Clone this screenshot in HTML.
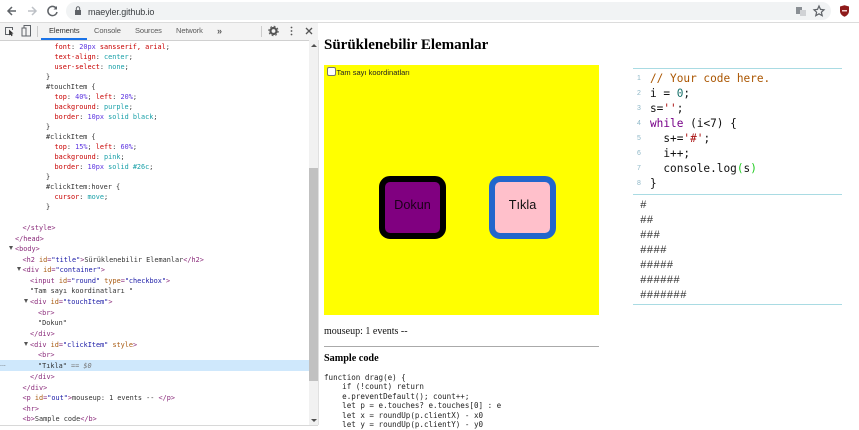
<!DOCTYPE html>
<html><head><meta charset="utf-8">
<style>
html,body{margin:0;padding:0;background:#fff;width:859px;height:430px;overflow:hidden}
body{position:relative;font-family:"Liberation Sans",sans-serif}
.a{position:absolute;white-space:pre}
.d{position:absolute;white-space:pre;font:6.85px/10px "DejaVu Sans Mono",monospace;color:#333}
.r{color:#c80000}.c{color:#18a0a8}.n{color:#5a32e0}.t{color:#8a2a7a}.at{color:#a85a10}.v{color:#1a1aa6}.g{color:#a8a8a8}
.tab{position:absolute;top:25px;font:7.5px/12px "Liberation Sans",sans-serif;letter-spacing:-.1px;color:#5a5a5a}
.cd{position:absolute;white-space:pre;font:11.1px/15px "DejaVu Sans Mono",monospace;color:#111;left:650px}
.ln{position:absolute;font:7px/15px "Liberation Sans",sans-serif;color:#8fb8c8;left:637px}
.o{position:absolute;white-space:pre;font:11.1px/15px "Liberation Mono",monospace;color:#333;left:640px}
.hl{position:absolute;left:633px;width:209px;height:1px;background:#a9dbe3}
</style></head><body>

<!-- browser bar -->
<div style="position:absolute;left:66px;top:2px;width:765px;height:18px;border-radius:9px;background:#f1f3f4"></div>
<svg style="position:absolute;left:0;top:0" width="100" height="22" fill="none" stroke-width="1.5">
<path d="M16 11H8M12 7l-4 4 4 4" stroke="#5f6368"/>
<path d="M28 11h8M32 7l4 4-4 4" stroke="#bdc1c6"/>
<path d="M56 8a4.6 4.6 0 1 0 1 4" stroke="#5f6368"/><path d="M57 6v3.5h-3.5z" fill="#5f6368"/>
<rect x="75" y="10" width="6" height="5" fill="#5f6368" stroke="none"/><path d="M76.3 10V8.5a1.7 1.7 0 0 1 3.4 0V10" stroke="#5f6368" stroke-width="1"/>
</svg>
<div class="a" style="left:88px;top:4.500px;font-size:9px;line-height:14px;letter-spacing:-.1px;color:#3c4043">maeyler.github.io</div>
<svg style="position:absolute;left:790px;top:0" width="69" height="22" fill="none">
<rect x="6" y="7" width="6" height="7" fill="#8a8f94"/><rect x="10" y="10" width="6" height="6" fill="#d0d2d5"/>
<path d="M29 6l1.5 3.4 3.5.4-2.6 2.4.8 3.5-3.2-1.9-3.2 1.9.8-3.5-2.6-2.4 3.5-.4z" stroke="#5f6368" stroke-width="1.2"/>
<path d="M50 6.5l4.5-1.2 4.5 1.2v4.5c0 3-2.3 4.8-4.5 5.8-2.2-1-4.500-2.800-4.500-5.800z" fill="#8e1a1a"/>
<rect x="52" y="10" width="5" height="1.500" fill="#f0d0d0"/>
</svg>

<!-- devtools toolbar -->
<div style="position:absolute;left:0;top:22px;width:859px;height:1px;background:#dcdcdc"></div>
<div style="position:absolute;left:0;top:23px;width:318px;height:17px;background:#f3f3f3;border-bottom:1px solid #d0d0d0"></div>
<svg style="position:absolute;left:0;top:23px" width="318" height="17" fill="none" stroke="#5f6368">
<path d="M12.500 11.500H5.500V4.500H12.500V7" stroke-width="1"/><path d="M9 6.500l4.500 4-2 .3 1 2-1 .5-1-2-1.300 1.200z" fill="#333" stroke="none"/>
<rect x="22" y="5" width="4" height="8" stroke-width="1"/><path d="M24 5V2.500h6.500V13H26" stroke-width="1"/>
<path d="M37.500 3v11" stroke="#ccc"/><path d="M261.500 3v11" stroke="#ccc"/>
<circle cx="273.500" cy="8" r="3" stroke="#555" stroke-width="2.200"/><circle cx="273.500" cy="8" r="4.700" stroke="#555" stroke-width="1" stroke-dasharray="1.800 1.900"/>
<circle cx="291.500" cy="4.500" r=".9" fill="#555" stroke="none"/><circle cx="291.500" cy="8" r=".9" fill="#555" stroke="none"/><circle cx="291.500" cy="11.500" r=".9" fill="#555" stroke="none"/>
<path d="M306 5l6 6M312 5l-6 6" stroke-width="1.300" stroke="#555"/>
</svg>
<div class="tab" style="left:49px;color:#333">Elements</div>
<div class="tab" style="left:94px">Console</div>
<div class="tab" style="left:135px">Sources</div>
<div class="tab" style="left:176px">Network</div>
<div class="tab" style="left:217px;font-weight:bold;font-size:9px">»</div>
<div style="position:absolute;left:41px;top:38px;width:46px;height:2px;background:#1a73e8"></div>

<!-- scrollbar -->
<div style="position:absolute;left:309px;top:40px;width:9px;height:385px;background:#f1f1f1"></div>
<div style="position:absolute;left:309px;top:168px;width:9px;height:213px;background:#c1c1c1"></div>
<div style="position:absolute;left:311px;top:44px;border:3px solid transparent;border-top:0;border-bottom:3px solid #505050"></div>
<div style="position:absolute;left:311px;top:419px;border:3px solid transparent;border-bottom:0;border-top:3px solid #505050"></div>
<div style="position:absolute;left:0;top:425px;width:318px;height:1px;background:#d8d8d8"></div>
<div style="position:absolute;left:318px;top:40px;width:1px;height:385px;background:#e0e0e0"></div>

<!-- highlight row -->
<div style="position:absolute;left:0;top:360px;width:309px;height:11px;background:#cfe8fc"></div>
<div class="a" style="left:0;top:360px;font:7px/10px 'Liberation Sans',sans-serif;color:#555">...</div>

<div style="position:absolute;left:0;top:1px">
<!-- css source -->
<div class="d" style="left:54.500px;top:41px"><span class="r">font</span>: <span class="n">20px</span> <span class="r">sansserif, arial</span>;</div>
<div class="d" style="left:54.500px;top:51px"><span class="r">text-align</span>: <span class="c">center</span>;</div>
<div class="d" style="left:54.500px;top:61px"><span class="r">user-select</span>: <span class="c">none</span>;</div>
<div class="d" style="left:46px;top:71px">}</div>
<div class="d" style="left:46px;top:81px">#touchItem {</div>
<div class="d" style="left:54.500px;top:91px"><span class="r">top</span>: <span class="n">40%</span>; <span class="r">left</span>: <span class="n">20%</span>;</div>
<div class="d" style="left:54.500px;top:101px"><span class="r">background</span>: <span class="c">purple</span>;</div>
<div class="d" style="left:54.500px;top:111px"><span class="r">border</span>: <span class="n">10px</span> <span class="c">solid black</span>;</div>
<div class="d" style="left:46px;top:121px">}</div>
<div class="d" style="left:46px;top:131px">#clickItem {</div>
<div class="d" style="left:54.500px;top:141px"><span class="r">top</span>: <span class="n">15%</span>; <span class="r">left</span>: <span class="n">60%</span>;</div>
<div class="d" style="left:54.500px;top:151px"><span class="r">background</span>: <span class="c">pink</span>;</div>
<div class="d" style="left:54.500px;top:161px"><span class="r">border</span>: <span class="n">10px</span> <span class="c">solid #26c</span>;</div>
<div class="d" style="left:46px;top:171px">}</div>
<div class="d" style="left:46px;top:181px">#clickItem:hover {</div>
<div class="d" style="left:54.500px;top:191px"><span class="r">cursor</span>: <span class="c">move</span>;</div>
<div class="d" style="left:46px;top:201px">}</div>

<!-- dom tree -->
<div class="d" style="left:22.500px;top:222px"><span class="t">&lt;/style&gt;</span></div>
<div class="d" style="left:15px;top:232.500px"><span class="t">&lt;/head&gt;</span></div>
<div class="d" style="left:15px;top:243px"><span class="t">&lt;body&gt;</span></div>
<div class="d" style="left:22.500px;top:253.500px"><span class="t">&lt;h2</span> <span class="at">id</span><span class="t">=</span><span class="v">"title"</span><span class="t">&gt;</span>Sürüklenebilir Elemanlar<span class="t">&lt;/h2&gt;</span></div>
<div class="d" style="left:22.500px;top:264px"><span class="t">&lt;div</span> <span class="at">id</span><span class="t">=</span><span class="v">"container"</span><span class="t">&gt;</span></div>
<div class="d" style="left:30px;top:275px"><span class="t">&lt;input</span> <span class="at">id</span><span class="t">=</span><span class="v">"round"</span> <span class="at">type</span><span class="t">=</span><span class="v">"checkbox"</span><span class="t">&gt;</span></div>
<div class="d" style="left:30px;top:285px">"Tam sayı koordinatları "</div>
<div class="d" style="left:30px;top:296px"><span class="t">&lt;div</span> <span class="at">id</span><span class="t">=</span><span class="v">"touchItem"</span><span class="t">&gt;</span></div>
<div class="d" style="left:38px;top:306.500px"><span class="t">&lt;br&gt;</span></div>
<div class="d" style="left:38px;top:317px">"Dokun"</div>
<div class="d" style="left:30px;top:328px"><span class="t">&lt;/div&gt;</span></div>
<div class="d" style="left:30px;top:338.500px"><span class="t">&lt;div</span> <span class="at">id</span><span class="t">=</span><span class="v">"clickItem"</span> <span class="at">style</span><span class="t">&gt;</span></div>
<div class="d" style="left:38px;top:349px"><span class="t">&lt;br&gt;</span></div>
<div class="d" style="left:38px;top:359.500px">"Tıkla" <span style="color:#777">== <i>$0</i></span></div>
<div class="d" style="left:30px;top:370.500px"><span class="t">&lt;/div&gt;</span></div>
<div class="d" style="left:22.500px;top:381.500px"><span class="t">&lt;/div&gt;</span></div>
<div class="d" style="left:22.500px;top:392px"><span class="t">&lt;p</span> <span class="at">id</span><span class="t">=</span><span class="v">"out"</span><span class="t">&gt;</span>mouseup: 1 events -- <span class="t">&lt;/p&gt;</span></div>
<div class="d" style="left:22.500px;top:402.500px"><span class="t">&lt;hr&gt;</span></div>
<div class="d" style="left:22.500px;top:413px"><span class="t">&lt;b&gt;</span>Sample code<span class="t">&lt;/b&gt;</span></div>
</div>
<svg style="position:absolute;left:0;top:240px" width="40" height="110" fill="#555">
<path d="M9 6h4l-2 4z"/><path d="M17 27h4l-2 4z"/><path d="M24 59h4l-2 4z"/><path d="M24 102h4l-2 4z"/>
</svg>

<!-- page -->
<div class="a" style="left:324px;top:36px;font:bold 15px/19px 'Liberation Serif',serif;color:#000">Sürüklenebilir Elemanlar</div>
<div style="position:absolute;left:324px;top:65px;width:275px;height:250px;background:#ff0"></div>
<div style="position:absolute;left:327px;top:67px;width:7px;height:7px;background:#fff;border:1px solid #767676;border-radius:2px"></div>
<div class="a" style="left:336.500px;top:67px;font-size:7.500px;line-height:11px;color:#222">Tam sayı koordinatları</div>
<div style="position:absolute;left:379px;top:176px;width:55px;height:51px;background:purple;border:6px solid #000;border-radius:11px;text-align:center;font-size:12.700px;line-height:17px"><div style="padding-top:15px;color:#1a0018">Dokun</div></div>
<div style="position:absolute;left:489px;top:176px;width:55px;height:51px;background:pink;border:6px solid #26c;border-radius:11px;text-align:center;font-size:12.700px;line-height:17px"><div style="padding-top:15px;color:#111">Tıkla</div></div>
<div class="a" style="left:324px;top:325px;font:10px/13px 'Liberation Serif',serif;color:#111">mouseup: 1 events --</div>
<div style="position:absolute;left:324px;top:346px;width:275px;height:1px;background:#aaa"></div>
<div class="a" style="left:324px;top:352px;font:bold 10.200px/13px 'Liberation Serif',serif;color:#000">Sample code</div>
<div class="a" style="left:324px;top:372.500px;font:7.550px/9.600px 'DejaVu Sans Mono',monospace;color:#222">function drag(e) {
    if (!count) return
    e.preventDefault(); count++;
    let p = e.touches? e.touches[0] : e
    let x = roundUp(p.clientX) - x0
    let y = roundUp(p.clientY) - y0</div>

<!-- code panel -->
<div class="hl" style="top:68px"></div>
<div class="hl" style="top:194px"></div>
<div class="hl" style="top:304px"></div>
<div class="ln" style="top:71px">1</div><div class="ln" style="top:86px">2</div><div class="ln" style="top:101px">3</div><div class="ln" style="top:116px">4</div><div class="ln" style="top:131px">5</div><div class="ln" style="top:146px">6</div><div class="ln" style="top:161px">7</div><div class="ln" style="top:176px">8</div>
<div class="cd" style="top:71px;color:#a50">// Your code here.</div>
<div class="cd" style="top:86px">i = <span style="color:#16706a">0</span>;</div>
<div class="cd" style="top:101px">s=<span style="color:#a11">''</span>;</div>
<div class="cd" style="top:116px"><span style="color:#708">while</span> (i&lt;7) {</div>
<div class="cd" style="top:131px">  s+=<span style="color:#a11">'#'</span>;</div>
<div class="cd" style="top:146px">  i++;</div>
<div class="cd" style="top:161px">  console.log<span style="color:#2c2">(</span>s<span style="color:#2c2">)</span></div>
<div class="cd" style="top:176px">}</div>
<div class="o" style="top:199px">#</div>
<div class="o" style="top:214px">##</div>
<div class="o" style="top:229px">###</div>
<div class="o" style="top:244px">####</div>
<div class="o" style="top:259px">#####</div>
<div class="o" style="top:274px">######</div>
<div class="o" style="top:289px">#######</div>
</body></html>
